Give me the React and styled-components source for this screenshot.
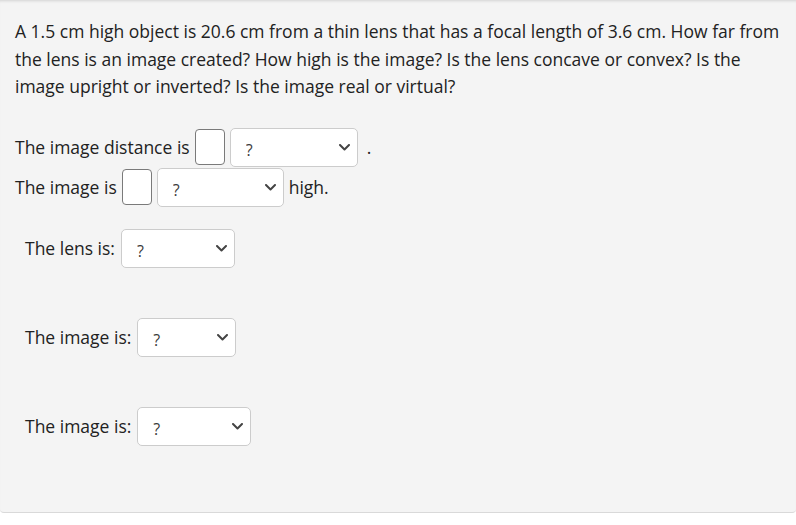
import React from "react";
import styled, { createGlobalStyle } from "styled-components";

const Global = createGlobalStyle`
  html, body { margin: 0; padding: 0; background: #ffffff; }
  body { font-family: "Open Sans", "Noto Sans", sans-serif; color: #222; }
`;

const Panel = styled.div`
  box-sizing: border-box;
  height: 513px;
  background: #f4f4f4;
  border-radius: 0 0 4px 4px;
  border-bottom: 1px solid #d9d9d9;
  box-shadow: inset 0 3px 3px -2px rgba(0, 0, 0, 0.14);
  padding: 18px 10px 0 15px;
`;

const Question = styled.p`
  margin: 0;
  font-size: 17.5px;
  line-height: 27.5px;
`;

const Answers = styled.div`
  margin-top: 27px;
  display: flex;
  flex-direction: column;
`;

const Row = styled.div`
  display: flex;
  align-items: center;
  gap: ${(p) => p.$gap || 5}px;
  height: 39px;
  margin-top: ${(p) => p.$top || 0}px;
  padding-left: ${(p) => p.$indent || 0}px;
  font-size: 17.5px;
`;

const Label = styled.span`
  white-space: nowrap;
  margin-left: ${(p) => p.$ml || 0}px;
`;

const NumBox = styled.input`
  box-sizing: border-box;
  width: 30px;
  height: 36px;
  margin: 0;
  padding: 0 4px;
  background: #fff;
  border: 1px solid #7a7a7a;
  border-radius: 4px;
  font-family: inherit;
  font-size: 16px;
  outline: none;
`;

const SelectWrap = styled.span`
  position: relative;
  display: inline-flex;
  width: ${(p) => p.$w}px;
  height: 39px;
`;

const Select = styled.select`
  appearance: none;
  -webkit-appearance: none;
  box-sizing: border-box;
  width: 100%;
  height: 100%;
  margin: 0;
  padding: 5px 24px 0 15px;
  background: #fff;
  border: 1px solid #cccccc;
  border-radius: 5px;
  font-family: "Open Sans", "Noto Sans", sans-serif;
  font-size: 16px;
  color: #3a3a3a;
  outline: none;
`;

const Chevron = styled.svg`
  position: absolute;
  right: 8px;
  top: 50%;
  margin-top: -3px;
  width: 11px;
  height: 7px;
  pointer-events: none;
`;

function Dropdown({ width }) {
  return (
    <SelectWrap $w={width}>
      <Select defaultValue="?">
        <option value="?">?</option>
      </Select>
      <Chevron viewBox="0 0 11 7">
        <path d="M1 1 L5.5 5.5 L10 1" fill="none" stroke="#444" strokeWidth="2" strokeLinecap="round" strokeLinejoin="round" />
      </Chevron>
    </SelectWrap>
  );
}

export default function App() {
  return (
    <>
      <Global />
      <Panel>
        <Question>
          A 1.5 cm high object is 20.6 cm from a thin lens that has a focal length of 3.6 cm. How far from
          the lens is an image created? How high is the image? Is the lens concave or convex? Is the image
          upright or inverted? Is the image real or virtual?
        </Question>
        <Answers>
          <Row>
            <Label>The image distance is</Label>
            <NumBox type="text" aria-label="image distance" />
            <Dropdown width={128} />
            <Label $ml={4}>.</Label>
          </Row>
          <Row $top={1}>
            <Label>The image is</Label>
            <NumBox type="text" aria-label="image height" />
            <Dropdown width={127} />
            <Label>high.</Label>
          </Row>
          <Row $top={22} $indent={10} $gap={6}>
            <Label>The lens is:</Label>
            <Dropdown width={114} />
          </Row>
          <Row $top={50} $indent={10} $gap={6}>
            <Label>The image is:</Label>
            <Dropdown width={99} />
          </Row>
          <Row $top={50} $indent={10} $gap={6}>
            <Label>The image is:</Label>
            <Dropdown width={114} />
          </Row>
        </Answers>
      </Panel>
    </>
  );
}
